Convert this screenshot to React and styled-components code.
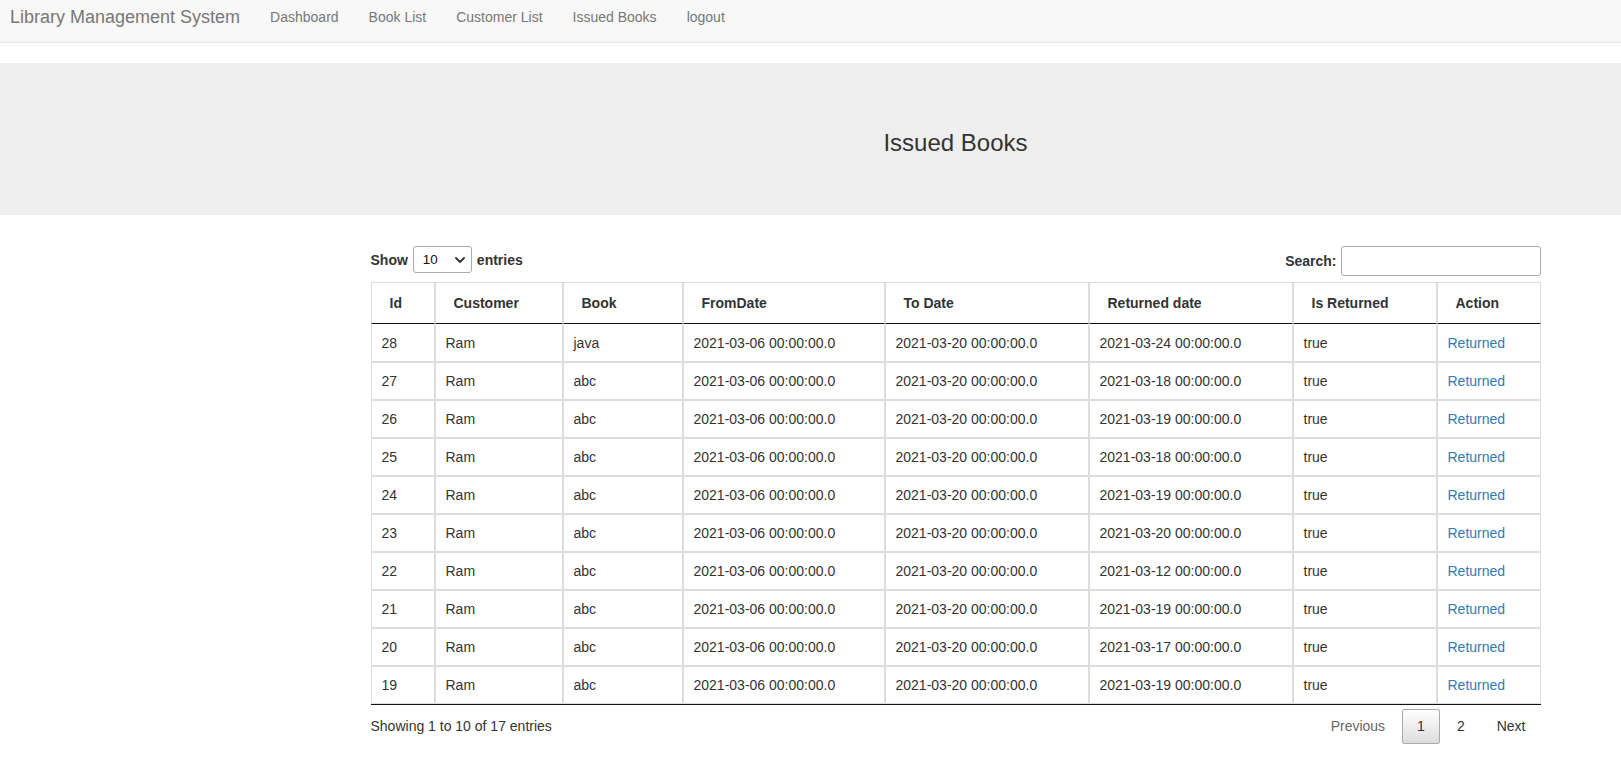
import React from 'react';
import styled, {createGlobalStyle} from 'styled-components';

const GlobalStyle = createGlobalStyle`
    body{
        margin:0;
        background:#fff;
        color:#333;
        font-family:"Liberation Sans", Arial, Helvetica, sans-serif;
        font-size:14px;
        line-height:20px;
    }
    *{
        box-sizing:border-box;
    }
`;

const Navbar = styled.nav`
    height:43px;
    display:flex;
    align-items:flex-start;
    background-color:#f8f8f8;
    border-bottom:1px solid #e7e7e7;
`;

const Brand = styled.a`
    padding:7px 15px 15px 10px;
    font-size:18px;
    line-height:20px;
    color:#777;
    text-decoration:none;
    cursor:pointer;
`;

const NavLink = styled.a`
    padding:7px 15px 15px;
    font-size:14px;
    line-height:20px;
    color:#777;
    text-decoration:none;
    cursor:pointer;
`;

const Jumbotron = styled.div`
    margin-top:20px;
    height:152px;
    padding:67px 0 0 290px;
    background-color:#eee;
    display:flex;
    justify-content:center;
`;

const Title = styled.h3`
    margin:0;
    font-size:24px;
    font-weight:normal;
    line-height:1.1;
    color:#333;
`;

const Main = styled.main`
    padding:31px 0 40px 290px;
    display:flex;
    justify-content:center;
`;

const Wrapper = styled.div`
    width:1170px;
`;

const Controls = styled.div`
    display:flex;
    justify-content:space-between;
    align-items:flex-start;
    margin-bottom:6px;
`;

const ControlLabel = styled.label`
    display:flex;
    align-items:center;
    gap:${props=>props.gap||5}px;
    font-weight:bold;
    color:#333;
`;

const SelectWrap = styled.div`
    position:relative;
    width:59px;
    height:27px;
`;

const Select = styled.select`
    appearance:none;
    width:100%;
    height:100%;
    padding:0 0 0 9px;
    border:1px solid #aaa;
    border-radius:3px;
    background:#fff;
    font-family:"Liberation Sans", Arial, sans-serif;
    font-size:13.33px;
    color:#111;
    outline:none;
`;

const Chevron = styled.svg`
    position:absolute;
    right:7px;
    top:11px;
    pointer-events:none;
`;

const SearchInput = styled.input`
    width:200px;
    height:30px;
    padding:4px 6px;
    border:1px solid #aaa;
    border-radius:3px;
    font-family:"Liberation Sans", Arial, sans-serif;
    font-size:14px;
    outline:none;
`;

const Table = styled.table`
    width:1170px;
    table-layout:fixed;
    border-collapse:separate;
    border-spacing:0;
    border-bottom:1px solid #111;
`;

const Th = styled.th`
    width:${props=>props.w}px;
    padding:10px 18px;
    text-align:left;
    font-weight:bold;
    line-height:20px;
    border:1px solid #ddd;
    border-bottom:1px solid #111;
    white-space:nowrap;
`;

const Row = styled.tr`
    &:first-child td{
        border-top-color:transparent;
    }
`;

const Td = styled.td`
    padding:8px 10px;
    line-height:20px;
    border:1px solid #ddd;
    white-space:nowrap;
    color:#333;
`;

const ActionLink = styled.a`
    color:#337ab7;
    text-decoration:none;
    cursor:pointer;
`;

const Footer = styled.div`
    display:flex;
    justify-content:space-between;
    align-items:center;
    padding-top:4px;
`;

const Info = styled.div`
    color:#333;
    margin-top:-2px;
`;

const Paginate = styled.div`
    display:flex;
`;

const PageButton = styled.a`
    margin-left:2px;
    padding:7px 14px;
    line-height:19px;
    min-width:21px;
    text-align:center;
    border:1px solid ${props=>props.current?'#aaa':'transparent'};
    border-radius:2px;
    background:${props=>props.current?'linear-gradient(to bottom, #fff 0%, #dcdcdc 100%)':'transparent'};
    color:${props=>props.disabled?'#666':'#333'};
    cursor:${props=>props.disabled?'default':'pointer'};
`;

const columns=[
    {label:'Id', w:64},
    {label:'Customer', w:128},
    {label:'Book', w:120},
    {label:'FromDate', w:202},
    {label:'To Date', w:204},
    {label:'Returned date', w:204},
    {label:'Is Returned', w:144},
    {label:'Action', w:104},
];

const rows=[
    {id:28, book:'java', ret:'24'},
    {id:27, book:'abc', ret:'18'},
    {id:26, book:'abc', ret:'19'},
    {id:25, book:'abc', ret:'18'},
    {id:24, book:'abc', ret:'19'},
    {id:23, book:'abc', ret:'20'},
    {id:22, book:'abc', ret:'12'},
    {id:21, book:'abc', ret:'19'},
    {id:20, book:'abc', ret:'17'},
    {id:19, book:'abc', ret:'19'},
];

function App(){
    return(
        <>
            <GlobalStyle/>
            <Navbar>
                <Brand>Library Management System</Brand>
                <NavLink>Dashboard</NavLink>
                <NavLink>Book List</NavLink>
                <NavLink>Customer List</NavLink>
                <NavLink>Issued Books</NavLink>
                <NavLink>logout</NavLink>
            </Navbar>
            <Jumbotron>
                <Title>Issued Books</Title>
            </Jumbotron>
            <Main>
                <Wrapper>
                    <Controls>
                        <ControlLabel>
                            Show
                            <SelectWrap>
                                <Select defaultValue="10">
                                    <option value="10">10</option>
                                    <option value="25">25</option>
                                    <option value="50">50</option>
                                    <option value="100">100</option>
                                </Select>
                                <Chevron width="10" height="6" viewBox="0 0 10 6">
                                    <polyline points="1,1 5,5 9,1" fill="none" stroke="#333" strokeWidth="1.8" strokeLinecap="round" strokeLinejoin="round"/>
                                </Chevron>
                            </SelectWrap>
                            entries
                        </ControlLabel>
                        <ControlLabel gap={4}>
                            Search:
                            <SearchInput type="search"/>
                        </ControlLabel>
                    </Controls>
                    <Table>
                        <thead>
                            <tr>
                                {columns.map(c=><Th key={c.label} w={c.w}>{c.label}</Th>)}
                            </tr>
                        </thead>
                        <tbody>
                            {rows.map(r=>(
                                <Row key={r.id}>
                                    <Td>{r.id}</Td>
                                    <Td>Ram</Td>
                                    <Td>{r.book}</Td>
                                    <Td>2021-03-06 00:00:00.0</Td>
                                    <Td>2021-03-20 00:00:00.0</Td>
                                    <Td>2021-03-{r.ret} 00:00:00.0</Td>
                                    <Td>true</Td>
                                    <Td><ActionLink>Returned</ActionLink></Td>
                                </Row>
                            ))}
                        </tbody>
                    </Table>
                    <Footer>
                        <Info>Showing 1 to 10 of 17 entries</Info>
                        <Paginate>
                            <PageButton disabled>Previous</PageButton>
                            <PageButton current>1</PageButton>
                            <PageButton>2</PageButton>
                            <PageButton>Next</PageButton>
                        </Paginate>
                    </Footer>
                </Wrapper>
            </Main>
        </>
    );
}

export default App;
